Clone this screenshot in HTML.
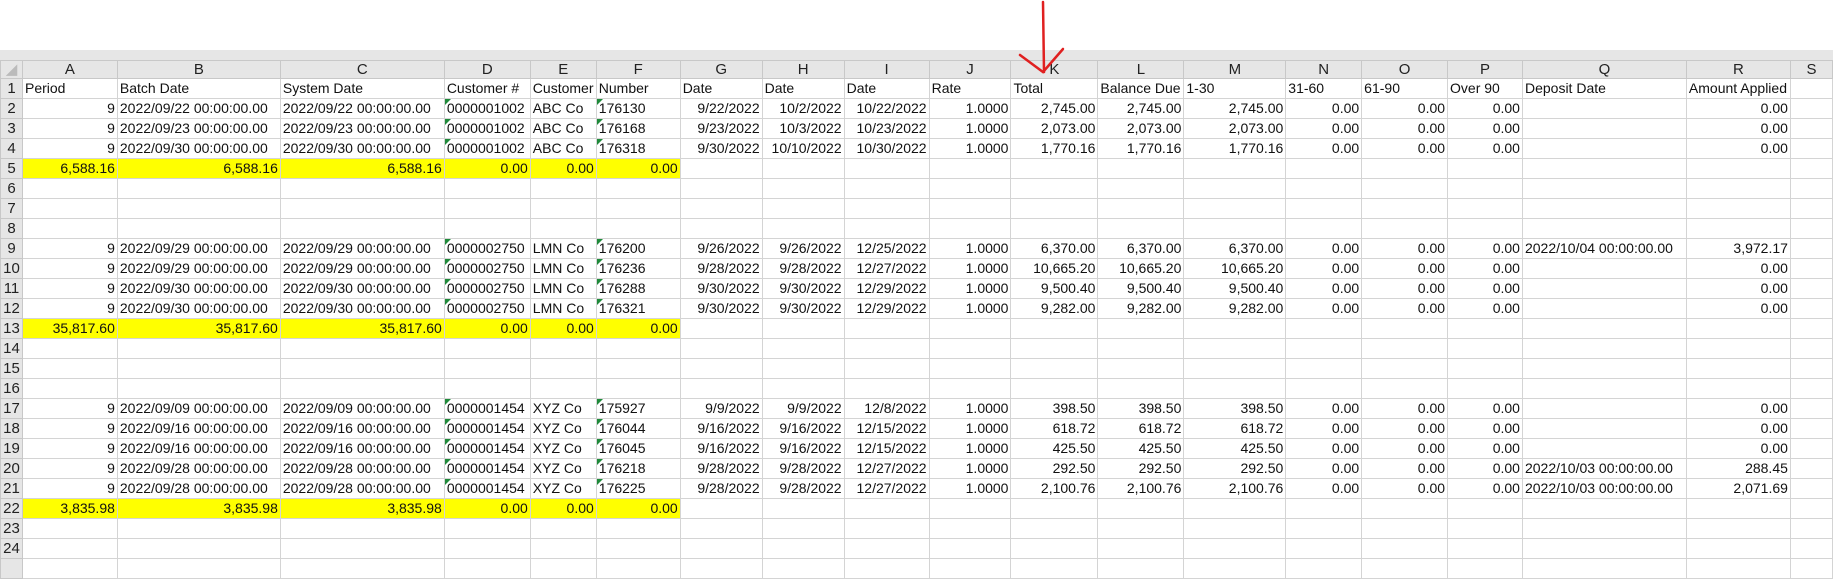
<!DOCTYPE html>
<html><head><meta charset="utf-8"><style>
body{margin:0;background:#fff;width:1833px;height:563px;overflow:hidden;position:relative;font-family:"Liberation Sans",sans-serif;}
.band{position:absolute;left:0;top:50px;width:1833px;height:10px;background:#e6e6e6;}
table{position:absolute;left:0;top:60px;border-collapse:collapse;table-layout:fixed;font-size:14px;color:#111;}
td{border:1px solid #d4d4d4;height:19px;padding:0 2px;white-space:nowrap;overflow:hidden;text-align:right;line-height:19px;position:relative;}
tr.h td{background:#e6e6e6;text-align:center;height:17px;line-height:17px;font-size:15px;color:#222;border-color:#c8c8c8;}
td.rh{background:#e6e6e6;text-align:center;font-size:15px;color:#222;padding:0;border-color:#c8c8c8;}
td.l{text-align:left;}
td.y{background:#ffff00;}
td.t::before{content:"";position:absolute;left:0;top:0;border-top:6px solid #1f8a3a;border-right:6px solid transparent;}
svg{position:absolute;left:0;top:0;z-index:5}
</style></head><body>
<div class="band"></div>
<table>
<colgroup><col style="width:22px"><col style="width:95px"><col style="width:163px"><col style="width:164px"><col style="width:86px"><col style="width:66px"><col style="width:84px"><col style="width:82px"><col style="width:82px"><col style="width:85px"><col style="width:82px"><col style="width:87px"><col style="width:86px"><col style="width:102px"><col style="width:76px"><col style="width:86px"><col style="width:75px"><col style="width:164px"><col style="width:104px"><col style="width:42px"></colgroup>
<tr class="h"><td style="color:#bbb">◢</td><td>A</td><td>B</td><td>C</td><td>D</td><td>E</td><td>F</td><td>G</td><td>H</td><td>I</td><td>J</td><td>K</td><td>L</td><td>M</td><td>N</td><td>O</td><td>P</td><td>Q</td><td>R</td><td>S</td></tr>
<tr><td class="rh">1</td><td class="l">Period</td><td class="l">Batch Date</td><td class="l">System Date</td><td class="l">Customer #</td><td class="l">Customer</td><td class="l">Number</td><td class="l">Date</td><td class="l">Date</td><td class="l">Date</td><td class="l">Rate</td><td class="l">Total</td><td class="l">Balance Due</td><td class="l">1-30</td><td class="l">31-60</td><td class="l">61-90</td><td class="l">Over 90</td><td class="l">Deposit Date</td><td class="l">Amount Applied</td><td></td></tr>
<tr><td class="rh">2</td><td>9</td><td class="l">2022/09/22 00:00:00.00</td><td class="l">2022/09/22 00:00:00.00</td><td class="l t">0000001002</td><td class="l">ABC Co</td><td class="l t">176130</td><td>9/22/2022</td><td>10/2/2022</td><td>10/22/2022</td><td>1.0000</td><td>2,745.00</td><td>2,745.00</td><td>2,745.00</td><td>0.00</td><td>0.00</td><td>0.00</td><td></td><td>0.00</td><td></td></tr>
<tr><td class="rh">3</td><td>9</td><td class="l">2022/09/23 00:00:00.00</td><td class="l">2022/09/23 00:00:00.00</td><td class="l t">0000001002</td><td class="l">ABC Co</td><td class="l t">176168</td><td>9/23/2022</td><td>10/3/2022</td><td>10/23/2022</td><td>1.0000</td><td>2,073.00</td><td>2,073.00</td><td>2,073.00</td><td>0.00</td><td>0.00</td><td>0.00</td><td></td><td>0.00</td><td></td></tr>
<tr><td class="rh">4</td><td>9</td><td class="l">2022/09/30 00:00:00.00</td><td class="l">2022/09/30 00:00:00.00</td><td class="l t">0000001002</td><td class="l">ABC Co</td><td class="l t">176318</td><td>9/30/2022</td><td>10/10/2022</td><td>10/30/2022</td><td>1.0000</td><td>1,770.16</td><td>1,770.16</td><td>1,770.16</td><td>0.00</td><td>0.00</td><td>0.00</td><td></td><td>0.00</td><td></td></tr>
<tr><td class="rh">5</td><td class="y">6,588.16</td><td class="y">6,588.16</td><td class="y">6,588.16</td><td class="y">0.00</td><td class="y">0.00</td><td class="y">0.00</td><td></td><td></td><td></td><td></td><td></td><td></td><td></td><td></td><td></td><td></td><td></td><td></td><td></td></tr>
<tr><td class="rh">6</td><td></td><td></td><td></td><td></td><td></td><td></td><td></td><td></td><td></td><td></td><td></td><td></td><td></td><td></td><td></td><td></td><td></td><td></td><td></td></tr>
<tr><td class="rh">7</td><td></td><td></td><td></td><td></td><td></td><td></td><td></td><td></td><td></td><td></td><td></td><td></td><td></td><td></td><td></td><td></td><td></td><td></td><td></td></tr>
<tr><td class="rh">8</td><td></td><td></td><td></td><td></td><td></td><td></td><td></td><td></td><td></td><td></td><td></td><td></td><td></td><td></td><td></td><td></td><td></td><td></td><td></td></tr>
<tr><td class="rh">9</td><td>9</td><td class="l">2022/09/29 00:00:00.00</td><td class="l">2022/09/29 00:00:00.00</td><td class="l t">0000002750</td><td class="l">LMN Co</td><td class="l t">176200</td><td>9/26/2022</td><td>9/26/2022</td><td>12/25/2022</td><td>1.0000</td><td>6,370.00</td><td>6,370.00</td><td>6,370.00</td><td>0.00</td><td>0.00</td><td>0.00</td><td class="l">2022/10/04 00:00:00.00</td><td>3,972.17</td><td></td></tr>
<tr><td class="rh">10</td><td>9</td><td class="l">2022/09/29 00:00:00.00</td><td class="l">2022/09/29 00:00:00.00</td><td class="l t">0000002750</td><td class="l">LMN Co</td><td class="l t">176236</td><td>9/28/2022</td><td>9/28/2022</td><td>12/27/2022</td><td>1.0000</td><td>10,665.20</td><td>10,665.20</td><td>10,665.20</td><td>0.00</td><td>0.00</td><td>0.00</td><td></td><td>0.00</td><td></td></tr>
<tr><td class="rh">11</td><td>9</td><td class="l">2022/09/30 00:00:00.00</td><td class="l">2022/09/30 00:00:00.00</td><td class="l t">0000002750</td><td class="l">LMN Co</td><td class="l t">176288</td><td>9/30/2022</td><td>9/30/2022</td><td>12/29/2022</td><td>1.0000</td><td>9,500.40</td><td>9,500.40</td><td>9,500.40</td><td>0.00</td><td>0.00</td><td>0.00</td><td></td><td>0.00</td><td></td></tr>
<tr><td class="rh">12</td><td>9</td><td class="l">2022/09/30 00:00:00.00</td><td class="l">2022/09/30 00:00:00.00</td><td class="l t">0000002750</td><td class="l">LMN Co</td><td class="l t">176321</td><td>9/30/2022</td><td>9/30/2022</td><td>12/29/2022</td><td>1.0000</td><td>9,282.00</td><td>9,282.00</td><td>9,282.00</td><td>0.00</td><td>0.00</td><td>0.00</td><td></td><td>0.00</td><td></td></tr>
<tr><td class="rh">13</td><td class="y">35,817.60</td><td class="y">35,817.60</td><td class="y">35,817.60</td><td class="y">0.00</td><td class="y">0.00</td><td class="y">0.00</td><td></td><td></td><td></td><td></td><td></td><td></td><td></td><td></td><td></td><td></td><td></td><td></td><td></td></tr>
<tr><td class="rh">14</td><td></td><td></td><td></td><td></td><td></td><td></td><td></td><td></td><td></td><td></td><td></td><td></td><td></td><td></td><td></td><td></td><td></td><td></td><td></td></tr>
<tr><td class="rh">15</td><td></td><td></td><td></td><td></td><td></td><td></td><td></td><td></td><td></td><td></td><td></td><td></td><td></td><td></td><td></td><td></td><td></td><td></td><td></td></tr>
<tr><td class="rh">16</td><td></td><td></td><td></td><td></td><td></td><td></td><td></td><td></td><td></td><td></td><td></td><td></td><td></td><td></td><td></td><td></td><td></td><td></td><td></td></tr>
<tr><td class="rh">17</td><td>9</td><td class="l">2022/09/09 00:00:00.00</td><td class="l">2022/09/09 00:00:00.00</td><td class="l t">0000001454</td><td class="l">XYZ Co</td><td class="l t">175927</td><td>9/9/2022</td><td>9/9/2022</td><td>12/8/2022</td><td>1.0000</td><td>398.50</td><td>398.50</td><td>398.50</td><td>0.00</td><td>0.00</td><td>0.00</td><td></td><td>0.00</td><td></td></tr>
<tr><td class="rh">18</td><td>9</td><td class="l">2022/09/16 00:00:00.00</td><td class="l">2022/09/16 00:00:00.00</td><td class="l t">0000001454</td><td class="l">XYZ Co</td><td class="l t">176044</td><td>9/16/2022</td><td>9/16/2022</td><td>12/15/2022</td><td>1.0000</td><td>618.72</td><td>618.72</td><td>618.72</td><td>0.00</td><td>0.00</td><td>0.00</td><td></td><td>0.00</td><td></td></tr>
<tr><td class="rh">19</td><td>9</td><td class="l">2022/09/16 00:00:00.00</td><td class="l">2022/09/16 00:00:00.00</td><td class="l t">0000001454</td><td class="l">XYZ Co</td><td class="l t">176045</td><td>9/16/2022</td><td>9/16/2022</td><td>12/15/2022</td><td>1.0000</td><td>425.50</td><td>425.50</td><td>425.50</td><td>0.00</td><td>0.00</td><td>0.00</td><td></td><td>0.00</td><td></td></tr>
<tr><td class="rh">20</td><td>9</td><td class="l">2022/09/28 00:00:00.00</td><td class="l">2022/09/28 00:00:00.00</td><td class="l t">0000001454</td><td class="l">XYZ Co</td><td class="l t">176218</td><td>9/28/2022</td><td>9/28/2022</td><td>12/27/2022</td><td>1.0000</td><td>292.50</td><td>292.50</td><td>292.50</td><td>0.00</td><td>0.00</td><td>0.00</td><td class="l">2022/10/03 00:00:00.00</td><td>288.45</td><td></td></tr>
<tr><td class="rh">21</td><td>9</td><td class="l">2022/09/28 00:00:00.00</td><td class="l">2022/09/28 00:00:00.00</td><td class="l t">0000001454</td><td class="l">XYZ Co</td><td class="l t">176225</td><td>9/28/2022</td><td>9/28/2022</td><td>12/27/2022</td><td>1.0000</td><td>2,100.76</td><td>2,100.76</td><td>2,100.76</td><td>0.00</td><td>0.00</td><td>0.00</td><td class="l">2022/10/03 00:00:00.00</td><td>2,071.69</td><td></td></tr>
<tr><td class="rh">22</td><td class="y">3,835.98</td><td class="y">3,835.98</td><td class="y">3,835.98</td><td class="y">0.00</td><td class="y">0.00</td><td class="y">0.00</td><td></td><td></td><td></td><td></td><td></td><td></td><td></td><td></td><td></td><td></td><td></td><td></td><td></td></tr>
<tr><td class="rh">23</td><td></td><td></td><td></td><td></td><td></td><td></td><td></td><td></td><td></td><td></td><td></td><td></td><td></td><td></td><td></td><td></td><td></td><td></td><td></td></tr>
<tr><td class="rh">24</td><td></td><td></td><td></td><td></td><td></td><td></td><td></td><td></td><td></td><td></td><td></td><td></td><td></td><td></td><td></td><td></td><td></td><td></td><td></td></tr>
<tr><td class="rh"></td><td></td><td></td><td></td><td></td><td></td><td></td><td></td><td></td><td></td><td></td><td></td><td></td><td></td><td></td><td></td><td></td><td></td><td></td><td></td></tr>
</table>
<svg width="1833" height="80"><g stroke="#e02020" stroke-width="2.5" fill="none" stroke-linecap="round"><path d="M1043 2 L1044 72"/><path d="M1020 55 L1043 72 L1063 49"/></g></svg>
</body></html>
